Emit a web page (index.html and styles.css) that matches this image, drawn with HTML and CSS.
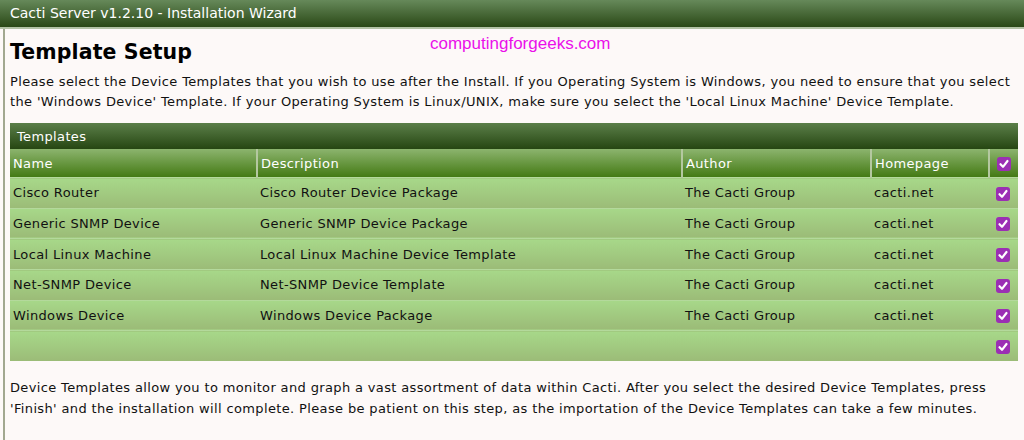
FILE: index.html
```html
<!DOCTYPE html>
<html>
<head>
<meta charset="utf-8">
<link rel="stylesheet" href="styles.css">
</head>
<body>
<div class="titlebar">Cacti Server v1.2.10 - Installation Wizard</div>
<div class="page">
  <div class="watermark">computingforgeeks.com</div>
  <h1 class="heading">Template Setup</h1>
  <p class="intro">Please select the Device Templates that you wish to use after the Install. If you Operating System is Windows, you need to ensure that you select the 'Windows Device' Template. If your Operating System is Linux/UNIX, make sure you select the 'Local Linux Machine' Device Template.</p>
  <table class="templates">
    <colgroup>
      <col class="c-name">
      <col class="c-desc">
      <col class="c-author">
      <col class="c-home">
      <col class="c-check">
    </colgroup>
    <thead>
      <tr class="caption-row"><th colspan="5">Templates</th></tr>
      <tr class="cols">
        <th>Name</th>
        <th>Description</th>
        <th>Author</th>
        <th>Homepage</th>
        <th class="chk"><span class="cb"><svg viewBox="0 0 14 14"><path d="M3.5 7.2 L6 9.8 L10.5 4" /></svg></span></th>
      </tr>
    </thead>
    <tbody>
      <tr><td>Cisco Router</td><td>Cisco Router Device Package</td><td>The Cacti Group</td><td>cacti.net</td><td class="chk"><span class="cb"><svg viewBox="0 0 14 14"><path d="M3.5 7.2 L6 9.8 L10.5 4" /></svg></span></td></tr>
      <tr><td>Generic SNMP Device</td><td>Generic SNMP Device Package</td><td>The Cacti Group</td><td>cacti.net</td><td class="chk"><span class="cb"><svg viewBox="0 0 14 14"><path d="M3.5 7.2 L6 9.8 L10.5 4" /></svg></span></td></tr>
      <tr><td>Local Linux Machine</td><td>Local Linux Machine Device Template</td><td>The Cacti Group</td><td>cacti.net</td><td class="chk"><span class="cb"><svg viewBox="0 0 14 14"><path d="M3.5 7.2 L6 9.8 L10.5 4" /></svg></span></td></tr>
      <tr><td>Net-SNMP Device</td><td>Net-SNMP Device Template</td><td>The Cacti Group</td><td>cacti.net</td><td class="chk"><span class="cb"><svg viewBox="0 0 14 14"><path d="M3.5 7.2 L6 9.8 L10.5 4" /></svg></span></td></tr>
      <tr><td>Windows Device</td><td>Windows Device Package</td><td>The Cacti Group</td><td>cacti.net</td><td class="chk"><span class="cb"><svg viewBox="0 0 14 14"><path d="M3.5 7.2 L6 9.8 L10.5 4" /></svg></span></td></tr>
      <tr><td></td><td></td><td></td><td></td><td class="chk"><span class="cb"><svg viewBox="0 0 14 14"><path d="M3.5 7.2 L6 9.8 L10.5 4" /></svg></span></td></tr>
    </tbody>
  </table>
  <p class="outro">Device Templates allow you to monitor and graph a vast assortment of data within Cacti. After you select the desired Device Templates, press 'Finish' and the installation will complete. Please be patient on this step, as the importation of the Device Templates can take a few minutes.</p>
</div>
</body>
</html>
```
FILE: styles.css
```css
html, body {
  margin: 0;
  padding: 0;
  background: #fdf9f8;
  font-family: "DejaVu Sans", Verdana, sans-serif;
  font-size: 13px;
  color: #111;
}
.titlebar {
  height: 27px;
  line-height: 27px;
  padding-left: 10px;
  color: #fff;
  font-size: 14px;
  background: linear-gradient(#66895a, #2a4816);
  border-bottom: 2px solid #b3c2a6;
}
.page {
  position: relative;
  margin-left: 3px;
  border-left: 2px solid #a2a890;
  padding: 10px 6px 20px 5px;
  min-height: 400px;
  letter-spacing: 0.36px;
}
.watermark {
  position: absolute;
  left: 425px;
  top: 5px;
  font-family: "Liberation Sans", Arial, sans-serif;
  font-size: 17px;
  letter-spacing: 0;
  color: #ea10ea;
}
.heading {
  margin: 0;
  font-size: 20.5px;
  line-height: 26px;
  font-weight: bold;
  letter-spacing: 0.1px;
  color: #000;
}
.intro {
  margin: 7px 0 0;
  line-height: 20px;
}
.templates {
  margin-top: 11px;
  width: 1008px;
  border-collapse: collapse;
  table-layout: fixed;
}
.c-name { width: 247px; }
.c-desc { width: 425px; }
.c-author { width: 189px; }
.c-home { width: 118px; }
.c-check { width: 29px; }
.caption-row th {
  height: 26px;
  padding: 0 7px;
  text-align: left;
  font-weight: normal;
  color: #fff;
  background: linear-gradient(#5b7f49, #264612);
}
.cols th {
  height: 28px;
  padding: 0 3px;
  text-align: left;
  font-weight: normal;
  color: #fff;
  background: linear-gradient(#8cb46e, #447a14);
  border-left: 2px solid #b4c8a0;
}
.cols th:first-child { border-left: none; }
tbody td {
  height: 29.7px;
  padding: 0 3px;
  background: linear-gradient(#a7d889, #9bbb77);
  border-top: 1px solid #b4d99c;
  white-space: nowrap;
  overflow: hidden;
}
.chk {
  text-align: left;
}
.cols th.chk, tbody td.chk {
  padding-left: 7px;
}
.cb {
  display: inline-block;
  width: 14px;
  height: 14px;
  border-radius: 3px;
  background: #9b2fb4;
  vertical-align: middle;
}
.cb svg {
  width: 14px;
  height: 14px;
  display: block;
}
.cb path {
  fill: none;
  stroke: #fff;
  stroke-width: 2.2;
  stroke-linecap: round;
  stroke-linejoin: round;
}
.outro {
  margin: 16px 0 0;
  line-height: 21px;
}
```
